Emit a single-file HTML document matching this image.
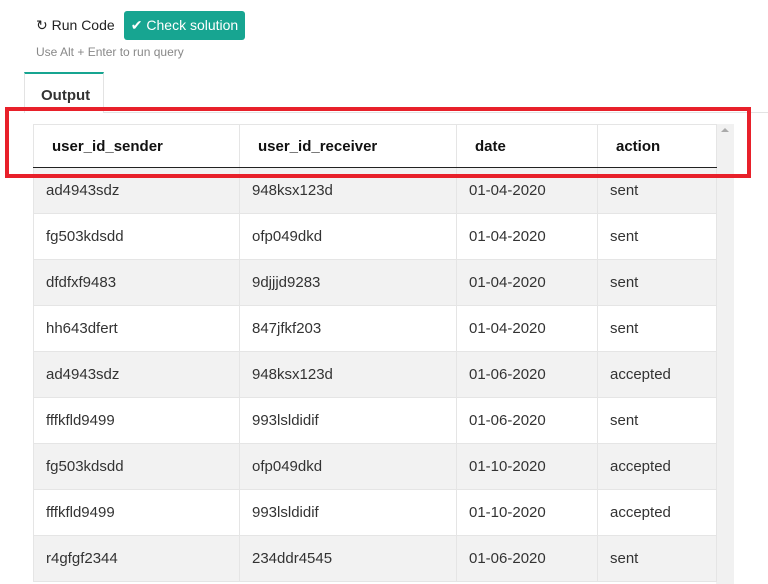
<!DOCTYPE html><html><head><style>
body{margin:0;width:768px;height:584px;overflow:hidden;background:#fff;font-family:"Liberation Sans",Arial,sans-serif;position:relative}
.run{position:absolute;left:36px;top:17px;font-size:14px;color:#222}
.btn{position:absolute;left:124px;top:11px;width:121px;height:29px;background:#17a591;border-radius:3px;color:#fff;font-size:14px;line-height:29px;text-align:center}
.hint{position:absolute;left:36px;top:45px;font-size:12px;color:#888}
.tab{position:absolute;left:24px;top:72px;width:80px;height:41px;border:1px solid #e3e3e3;border-top:2px solid #17a591;border-bottom:none;box-sizing:border-box;font-weight:bold;font-size:15px;color:#333;padding:13px 0 0 16px;background:#fff;z-index:2}
.line{position:absolute;left:104px;right:0;top:112px;border-top:1px solid #e3e3e3}
table{position:absolute;left:33px;top:124px;border-collapse:collapse;font-size:15px;color:#333}
td,th{border:1px solid #e5e5e5;height:46px;padding:0 0 0 12px;text-align:left;box-sizing:border-box}
th{font-weight:bold;color:#111;height:43px;padding-left:18px;border-bottom:1.5px solid #222}
tbody tr:nth-child(odd) td{background:#f2f2f2}
.sb{position:absolute;left:716px;top:124px;width:18px;height:460px;background:#f1f1f1}
.red{position:absolute;left:5px;top:107px;width:746px;height:71px;border:4px solid #e8202a;box-sizing:border-box;z-index:3}
</style></head><body>
<div class="run">&#x21bb; Run Code</div>
<div class="btn">&#10004; Check solution</div>
<div class="hint">Use Alt + Enter to run query</div>
<div class="tab">Output</div><div class="line"></div>
<div class="sb"><div style="margin:4px auto 0;width:0;height:0;border:4px solid transparent;border-bottom:4px solid #aaa;border-top:none"></div></div>
<table><colgroup><col style="width:206px"><col style="width:217px"><col style="width:141px"><col style="width:119px"></colgroup>
<thead><tr><th>user_id_sender</th><th>user_id_receiver</th><th>date</th><th>action</th></tr></thead><tbody>
<tr><td>ad4943sdz</td><td>948ksx123d</td><td>01-04-2020</td><td>sent</td></tr>
<tr><td>fg503kdsdd</td><td>ofp049dkd</td><td>01-04-2020</td><td>sent</td></tr>
<tr><td>dfdfxf9483</td><td>9djjjd9283</td><td>01-04-2020</td><td>sent</td></tr>
<tr><td>hh643dfert</td><td>847jfkf203</td><td>01-04-2020</td><td>sent</td></tr>
<tr><td>ad4943sdz</td><td>948ksx123d</td><td>01-06-2020</td><td>accepted</td></tr>
<tr><td>fffkfld9499</td><td>993lsldidif</td><td>01-06-2020</td><td>sent</td></tr>
<tr><td>fg503kdsdd</td><td>ofp049dkd</td><td>01-10-2020</td><td>accepted</td></tr>
<tr><td>fffkfld9499</td><td>993lsldidif</td><td>01-10-2020</td><td>accepted</td></tr>
<tr><td>r4gfgf2344</td><td>234ddr4545</td><td>01-06-2020</td><td>sent</td></tr>
</tbody></table>
<div class="red"></div>
</body></html>
